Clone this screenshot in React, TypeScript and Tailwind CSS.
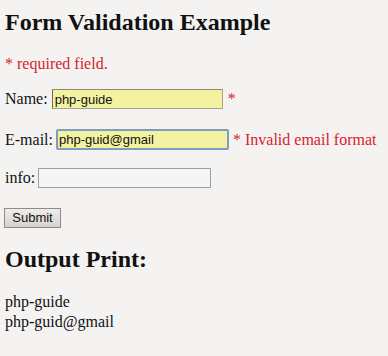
import { useState } from "react"

const serif = "font-['Liberation_Serif','Times_New_Roman',serif]"
const sans = "font-['Liberation_Sans',Arial,sans-serif]"

export default function App() {
  const [name, setName] = useState("php-guide")
  const [email, setEmail] = useState("php-guid@gmail")
  const [info, setInfo] = useState("")

  return (
    <div className={`min-h-[356px] w-full bg-[#f4f3f1] pl-[5px] pt-[7px] text-[16px] text-[#111] ${serif}`}>
      <h2 className="text-[24px] font-bold leading-[30px]">Form Validation Example</h2>
      <p className="mt-[18px] leading-[18px] text-[#d9212e]">* required field.</p>

      <div className="mt-[16px] flex h-[20px] items-center">
        <span>Name:</span>
        <input
          value={name}
          onChange={(e) => setName(e.target.value)}
          className={`ml-[4px] h-[20px] w-[171px] border border-[#a7a587] border-t-[#8a8a70] border-l-[#6e6e60] bg-[#f2f2a0] px-[2px] text-[13px] text-[#111] outline-none ${sans}`}
        />
        <span className="ml-[5px] text-[#d9212e]">*</span>
      </div>

      <div className="mt-[20px] flex h-[21px] items-center">
        <span>E-mail:</span>
        <input
          value={email}
          onChange={(e) => setEmail(e.target.value)}
          className={`ml-[3px] h-[21px] w-[173px] rounded-[2px] border-2 border-[#7f9cc0] bg-[#f2f2a0] px-[1px] text-[13px] text-[#111] outline-none ${sans}`}
        />
        <span className="ml-[4px] text-[#d9212e]">* Invalid email format</span>
      </div>

      <div className="mt-[18px] flex h-[20px] items-center">
        <span>info:</span>
        <input
          value={info}
          onChange={(e) => setInfo(e.target.value)}
          className={`ml-[3px] h-[20px] w-[173px] border border-[#a0a0a0] bg-[#f6f5f3] px-[2px] text-[13px] outline-none ${sans}`}
        />
      </div>

      <button
        className={`ml-[-1px] mt-[20px] block h-[20px] w-[57px] border border-[#8c8c8c] bg-gradient-to-b from-[#efedea] to-[#d6d3cf] text-[13px] leading-[18px] text-[#111] ${sans}`}
      >
        Submit
      </button>

      <h2 className="mt-[16px] text-[24px] font-bold leading-[30px]">Output Print:</h2>
      <div className="mt-[18px] leading-[20px]">
        {name}
        <br />
        {email}
      </div>
    </div>
  )
}
